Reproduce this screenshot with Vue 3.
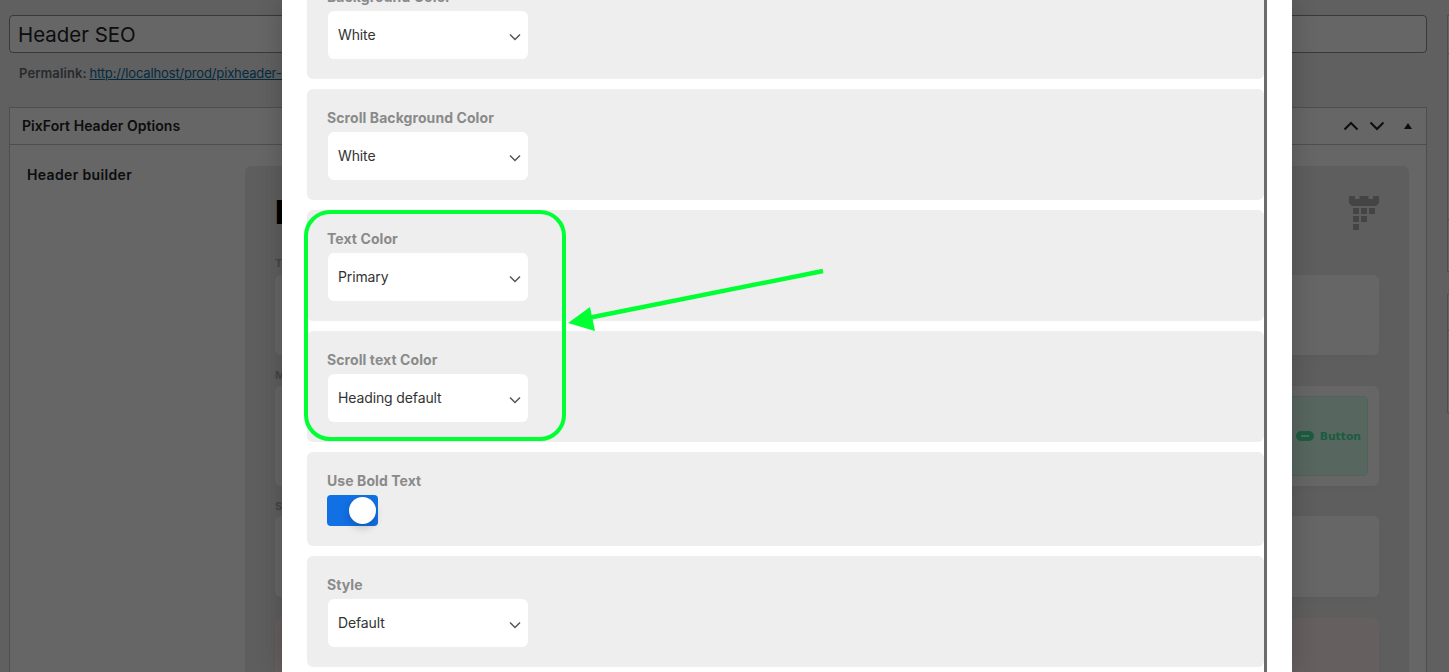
<script setup>
const cards = [
  { label: 'Background Color', value: 'White' },
  { label: 'Scroll Background Color', value: 'White' },
  { label: 'Text Color', value: 'Primary' },
  { label: 'Scroll text Color', value: 'Heading default' },
  { label: 'Use Bold Text', toggle: true },
  { label: 'Style', value: 'Default' }
]
</script>

<template>
  <div class="screen">
    <div class="page">
      <main class="main">
        <div class="title">Header SEO</div>
        <p class="permalink"><b>Permalink:</b> <a>http://localhost/prod/pixheader-seo/</a></p>
        <section class="box">
          <header class="box-head">
            <h2>PixFort Header Options</h2>
            <div class="box-tools">
              <svg width="16" height="10" viewBox="0 0 16 10"><path d="M1.5 8.5 8 2l6.500 6.500" /></svg>
              <svg width="16" height="10" viewBox="0 0 16 10"><path d="M1.500 1.500 8 8l6.500-6.500" /></svg>
              <svg class="tri" width="10" height="8" viewBox="0 0 10 8"><polygon points="5,1 9,7 1,7" /></svg>
            </div>
          </header>
          <div class="box-body">
            <div class="builder-label">Header builder</div>
            <div class="builder">
              <div class="builder-top">
                <div class="big">Builder</div>
                <svg class="tower" width="30" height="34" viewBox="0 0 30 34">
                  <path d="M0 0h6v3h4.500V0h9v3H24V0h6v7l-3 3H3L0 7z" />
                  <rect x="4" y="12" width="6" height="6" /><rect x="12" y="12" width="6" height="6" /><rect x="20" y="12" width="6" height="6" />
                  <rect x="4" y="20" width="6" height="6" /><rect x="12" y="20" width="6" height="6" />
                  <rect x="4" y="28" width="6" height="6" />
                </svg>
              </div>
              <div class="zone-label zl-t">Top</div>
              <div class="zone z-t"></div>
              <div class="zone-label zl-m">Main</div>
              <div class="zone z-m">
                <div class="btn-block">
                  <span class="pill"><i></i></span>
                  <span class="btn-text">Button</span>
                </div>
              </div>
              <div class="zone-label zl-s">Stuck</div>
              <div class="zone z-s"></div>
              <div class="zone z-r"></div>
            </div>
          </div>
        </section>
      </main>
      <aside class="side">
        <div class="side-box sb-one">
          <div class="sb-a"></div>
          <div class="sb-b"></div>
          <div class="sb-c"></div>
        </div>
        <div class="side-box sb-two">
          <div class="sb-d"></div>
          <div class="sb-e"></div>
        </div>
      </aside>
    </div>

    <div class="scrim"></div>

    <div class="modal">
      <div class="scroller">
        <div class="card" v-for="c in cards" :key="c.label" :class="{ 'card-toggle': c.toggle }">
          <label>{{ c.label }}</label>
          <div v-if="c.toggle" class="toggle"><span class="knob"></span></div>
          <div v-else class="select">
            <span>{{ c.value }}</span>
            <svg width="12" height="8" viewBox="0 0 12 8"><path d="M1 1.500 6 6.500l5-5" /></svg>
          </div>
        </div>
      </div>
    </div>

    <svg class="annotation" width="1449" height="672" viewBox="0 0 1449 672">
      <rect x="306" y="212" width="258" height="227" rx="24" ry="24" class="ring" />
      <line x1="823" y1="271" x2="588" y2="318" class="shaft" />
      <polygon points="568,323 590,307 595,331" class="head" />
    </svg>
  </div>
</template>

<style>
html, body { margin: 0; padding: 0; background: #f0f0f1; }
</style>

<style scoped>
.screen {
  position: relative;
  width: 1449px;
  height: 672px;
  overflow: hidden;
  font-family: Inter, "Liberation Sans", sans-serif;
}
.page {
  box-sizing: border-box;
  height: 672px;
  padding: 15px 0 0 9px;
  display: flex;
  gap: 20px;
  background: #f0f0f1;
  color: #1d2327;
}
.main { flex: 0 0 1418px; min-width: 0; }
.side { flex: 0 0 280px; }
.side-box { border: 1px solid #c3c4c7; background: #fff; box-sizing: border-box; }
.sb-one { height: 257px; }
.sb-two { height: 119px; margin-top: 22px; }
.sb-a { height: 37px; border-bottom: 1px solid #c3c4c7; }
.sb-b { height: 165px; border-bottom: 1px solid #c3c4c7; }
.sb-d { height: 35px; border-bottom: 1px solid #c3c4c7; }
.title {
  box-sizing: border-box;
  height: 38px;
  border: 1px solid #8c8f94;
  border-radius: 4px;
  background: #fff;
  padding: 1px 8px 0;
  font-size: 20.450px;
  line-height: 35px;
}
.permalink {
  margin: 11px 0 0 10px;
  font-size: 13px;
  line-height: 18px;
  color: #646970;
}
.permalink b { font-weight: 600; letter-spacing: 0.1px; }
.permalink a { margin-left: -1px; color: #0a6c9e; text-decoration: underline; letter-spacing: -0.15px; }
.box {
  margin-top: 25px;
  height: 600px;
  border: 1px solid #c3c4c7;
  background: #fff;
}
.box-head {
  box-sizing: border-box;
  height: 37px;
  display: flex;
  align-items: center;
  justify-content: space-between;
  padding: 0 12px;
  border-bottom: 1px solid #c3c4c7;
}
.box-head h2 {
  margin: 0 0 2px;
  font-size: 14px;
  font-weight: 600;
  letter-spacing: 0.05px;
}
.box-tools { display: flex; align-items: center; gap: 10px; }
.box-tools svg path { fill: none; stroke: #1d2327; stroke-width: 2; }
.box-tools .tri { margin-left: 8px; margin-right: 1px; fill: #1d2327; }
.box-body { display: flex; padding: 22px 17px 0 17px; }
.builder-label {
  width: 218px;
  font-size: 14px;
  font-weight: 600;
  letter-spacing: 0.35px;
  line-height: 16px;
  color: #1d2327;
}
.builder {
  position: relative;
  width: 1164px;
  height: 560px;
  margin-top: -1px;
  box-sizing: border-box;
  padding: 30px 30px 0;
  background: #ececec;
  border-radius: 6px;
}
.builder-top { display: flex; justify-content: space-between; align-items: flex-start; height: 42px; }
.big { font-size: 33px; line-height: 33px; font-weight: 800; color: #000; }
.tower { fill: #aaa; }
.zone-label { font-size: 11px; line-height: 14px; font-weight: 700; color: #aaa; }
.zone { background: #fff; border-radius: 6px; box-shadow: 0 4px 12px rgba(0,0,0,.03); box-sizing: border-box; }
.zl-t { margin-top: 18px; }
.z-t { height: 80px; margin-top: 5px; }
.zl-m { margin-top: 13px; }
.z-m { height: 100px; margin-top: 4px; padding: 10px 11px; }
.zl-s { margin-top: 13px; }
.z-s { height: 81px; margin-top: 3px; }
.z-r { height: 80px; margin-top: 21px; background: #ffeeef; }
.btn-block {
  height: 80px;
  margin-left: auto;
  width: 120px;
  display: flex;
  align-items: center;
  justify-content: flex-end;
  gap: 6px;
  padding: 0 6px 0 0;
  box-sizing: border-box;
  background: #dcfff0;
  border: 1px solid #c8f5e0;
  border-radius: 5px;
  color: #44e8a0;
  font-size: 10.800px;
  font-weight: 700;
  font-family: "DejaVu Sans", sans-serif;
}
.pill {
  width: 18px;
  height: 10px;
  border-radius: 5px;
  background: #44e8a0;
  display: flex;
  align-items: center;
  justify-content: center;
}
.pill i { width: 8px; height: 2px; background: #dcfff0; display: block; }
.scrim {
  position: absolute;
  inset: 0;
  background: rgba(0, 0, 0, .6);
}
.modal {
  position: absolute;
  left: 282px;
  top: 0;
  width: 1010px;
  height: 672px;
  box-sizing: border-box;
  padding-right: 25px;
  background: #fff;
  overflow: hidden;
  box-shadow: 0 0 24px rgba(0, 0, 0, .22);
}
.scroller {
  box-sizing: border-box;
  height: 672px;
  padding-left: 25px;
  border-right: 3px solid #6b6b6b;
  overflow: hidden;
}
.card {
  box-sizing: border-box;
  height: 111px;
  margin-bottom: 10px;
  padding: 20px 0 0 20px;
  background: #eee;
  border-radius: 6px;
}
.card:first-child { margin-top: -32px; }
.card-toggle { height: 94px; }
.card label {
  display: block;
  font-size: 14px;
  line-height: 17px;
  font-weight: 700;
  letter-spacing: 0.08px;
  color: #8a8a8a;
  margin-bottom: 6px;
}
.select {
  box-sizing: border-box;
  width: 200px;
  height: 48px;
  margin-left: 1px;
  padding: 0 7px 0 10px;
  display: flex;
  align-items: center;
  justify-content: space-between;
  background: #fff;
  border-radius: 6px;
  font-size: 14px;
  letter-spacing: -0.12px;
  color: #333;
}
.select span { margin-top: -1px; }
.select svg { margin-top: 3px; }
.select path { fill: none; stroke: #555; stroke-width: 1.500; }
.toggle {
  position: relative;
  width: 51px;
  height: 31px;
  background: #1170e4;
  border-radius: 4px;
}
.knob {
  position: absolute;
  left: 22px;
  top: 2px;
  width: 27px;
  height: 27px;
  border-radius: 50%;
  background: #fff;
  box-shadow: 0 4px 8px rgba(0, 0, 0, .2);
}
.annotation { position: absolute; left: 0; top: 0; pointer-events: none; }
.ring { fill: none; stroke: #00ff33; stroke-width: 4; }
.shaft { stroke: #00ff33; stroke-width: 4.500; }
.head { fill: #00ff33; }
</style>
